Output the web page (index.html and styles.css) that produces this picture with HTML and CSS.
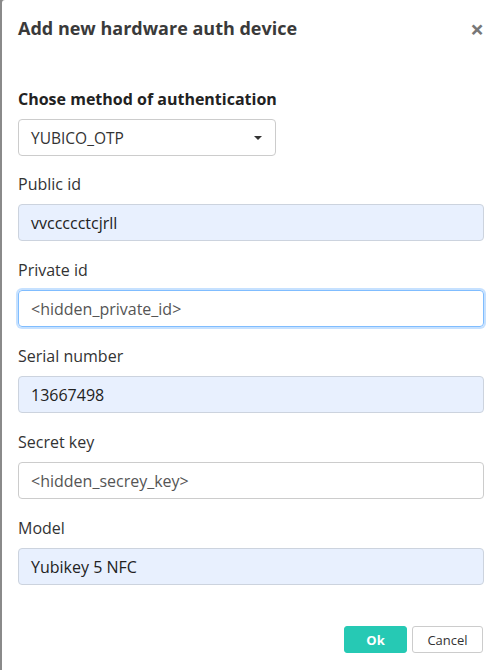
FILE: index.html
```html
<!DOCTYPE html>
<html>
<head>
<meta charset="utf-8">
<link rel="stylesheet" href="styles.css">
</head>
<body>
<div class="modal">
  <div class="header">
    <h1 class="title">Add new hardware auth device</h1>
    <span class="close">&times;</span>
  </div>
  <div class="body">
    <div class="method-label">Chose method of authentication</div>
    <div class="select">
      <span>YUBICO_OTP</span>
      <span class="caret"></span>
    </div>
    <div class="field">
      <label>Public id</label>
      <div class="input filled">vvccccctcjrll</div>
    </div>
    <div class="field">
      <label>Private id</label>
      <div class="input focus">&lt;hidden_private_id&gt;</div>
    </div>
    <div class="field">
      <label>Serial number</label>
      <div class="input filled">13667498</div>
    </div>
    <div class="field">
      <label>Secret key</label>
      <div class="input plain">&lt;hidden_secrey_key&gt;</div>
    </div>
    <div class="field">
      <label>Model</label>
      <div class="input filled">Yubikey 5 NFC</div>
    </div>
  </div>
  <div class="footer">
    <button class="btn ok">Ok</button>
    <button class="btn cancel">Cancel</button>
  </div>
</div>
</body>
</html>
```
FILE: styles.css
```css
html, body {
  margin: 0;
  padding: 0;
  height: 100%;
}
body {
  background: #8a8a8a;
  font-family: "Open Sans", "Noto Sans", sans-serif;
  color: #333;
  overflow: hidden;
}
.modal {
  margin-left: 2px;
  width: 498px;
  height: 670px;
  background: #fff;
  border-top-left-radius: 3px;
  box-sizing: border-box;
}
.header {
  display: flex;
  align-items: center;
  justify-content: space-between;
  height: 55px;
  padding: 0 16px 0 16px;
}
.title {
  margin: 0;
  font-size: 18px;
  font-weight: 700;
  color: #3a3a3a;
}
.close {
  font-size: 24px;
  font-weight: 700;
  color: #777;
  line-height: 1;
  margin-top: 2px;
}
.body {
  padding: 33px 16px 0 16px;
}
.method-label {
  font-size: 16px;
  font-weight: 700;
  color: #222;
  line-height: 22px;
}
.select {
  margin-top: 9px;
  width: 258px;
  height: 37px;
  box-sizing: border-box;
  border: 1px solid #ccc;
  border-radius: 4px;
  display: flex;
  align-items: center;
  justify-content: space-between;
  padding: 0 13px 0 12px;
  font-size: 15.5px;
  color: #333;
}
.caret {
  width: 0;
  height: 0;
  border-left: 4px solid transparent;
  border-right: 4px solid transparent;
  border-top: 4px solid #333;
}
.field {
  margin-top: 18px;
}
.field label {
  display: block;
  font-size: 16px;
  line-height: 20px;
  color: #333;
}
.input {
  margin-top: 10px;
  height: 37px;
  box-sizing: border-box;
  border: 1px solid #ccc;
  border-radius: 4px;
  display: flex;
  align-items: center;
  padding: 0 12px;
  font-size: 16px;
  color: #222;
}
.input.filled {
  background: #e8f0fe;
  border-color: #ccd3de;
}
.input.focus {
  border-color: #80bdff;
  box-shadow: 0 0 0 2px rgba(128, 189, 255, 0.45);
  color: #555;
}
.input.plain {
  color: #555;
}
.field + .field {
  margin-top: 19px;
}
.footer {
  display: flex;
  justify-content: flex-end;
  gap: 5px;
  padding: 41px 17px 0 0;
}
.btn {
  height: 27px;
  border-radius: 3px;
  font-family: "Open Sans", "Noto Sans", sans-serif;
  font-size: 13px;
  cursor: pointer;
  padding: 0;
}
.ok {
  width: 63px;
  background: #26c9b4;
  border: 1px solid #26c9b4;
  color: #fff;
  font-weight: 700;
}
.cancel {
  width: 71px;
  background: #fff;
  border: 1px solid #ccc;
  color: #333;
}
```
